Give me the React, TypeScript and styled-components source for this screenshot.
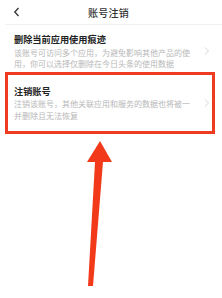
import styled, { createGlobalStyle } from 'styled-components'

const GlobalStyle = createGlobalStyle`
  html, body {
    margin: 0;
    padding: 0;
    background: #ffffff;
  }
  body {
    font-family: "Noto Sans CJK SC", "Noto Sans", sans-serif;
    -webkit-font-smoothing: antialiased;
  }
`

const Page = styled.div`
  width: 222px;
  height: 298px;
  overflow: hidden;
  background: #ffffff;
`

const Header = styled.div`
  position: relative;
  height: 24px;
  margin-left: 5px;
  display: flex;
  align-items: center;
  justify-content: center;
  border-bottom: 1px solid #f2f2f2;
`

const Back = styled.svg`
  position: absolute;
  left: 8px;
  top: 7px;
`

const Title = styled.div`
  margin-left: -10px;
  font-size: 10px;
  font-weight: 500;
  color: #333333;
  letter-spacing: 0.2px;
`

const Item = styled.div`
  display: flex;
  align-items: flex-start;
  padding: 0 12px 0 14px;
  margin-top: 8px;
`

const Highlight = styled.div`
  display: flex;
  align-items: flex-start;
  margin: 2px 7px 0 5px;
  border: 3px solid #ef3b1f;
  padding: 10px 2px 10px 6px;
`

const Body = styled.div`
  flex: 1;
`

const ItemTitle = styled.div`
  font-size: 9.2px;
  line-height: 12px;
  font-weight: 700;
  color: #222222;
`

const Desc = styled.div`
  width: 180px;
  margin-top: 1.5px;
  font-size: 8px;
  line-height: 11.5px;
  color: #b8b8b8;
`

const Chevron = styled.svg`
  margin-top: 14px;
  flex-shrink: 0;
`

const Pointer = styled.svg`
  display: block;
  margin: 5px 0 0 80px;
`

function ChevronRight() {
  return (
    <Chevron width="6" height="8" viewBox="0 0 6 8">
      <path d="M1 0.5 L4.5 4 L1 7.5" fill="none" stroke="#d0d0d0" strokeWidth="0.9" />
    </Chevron>
  )
}

export default function App() {
  return (
    <Page>
      <GlobalStyle />
      <Header>
        <Back width="8" height="10" viewBox="0 0 8 10">
          <path d="M5.5 1 L1.8 5 L5.5 9" fill="none" stroke="#333" strokeWidth="1.3" />
        </Back>
        <Title>账号注销</Title>
      </Header>
      <Item>
        <Body>
          <ItemTitle>删除当前应用使用痕迹</ItemTitle>
          <Desc>该账号可访问多个应用，为避免影响其他产品的使用，你可以选择仅删除在今日头条的使用数据</Desc>
        </Body>
        <ChevronRight />
      </Item>
      <Highlight>
        <Body>
          <ItemTitle>注销账号</ItemTitle>
          <Desc>注销该账号，其他关联应用和服务的数据也将被一并删除且无法恢复</Desc>
        </Body>
        <ChevronRight />
      </Highlight>
      <Pointer width="40" height="150" viewBox="0 0 40 150">
        <polygon
          points="20,2 32,23 23,23 13,147 8,147 15,23 7,23"
          fill="#f23a1a"
        />
      </Pointer>
    </Page>
  )
}
